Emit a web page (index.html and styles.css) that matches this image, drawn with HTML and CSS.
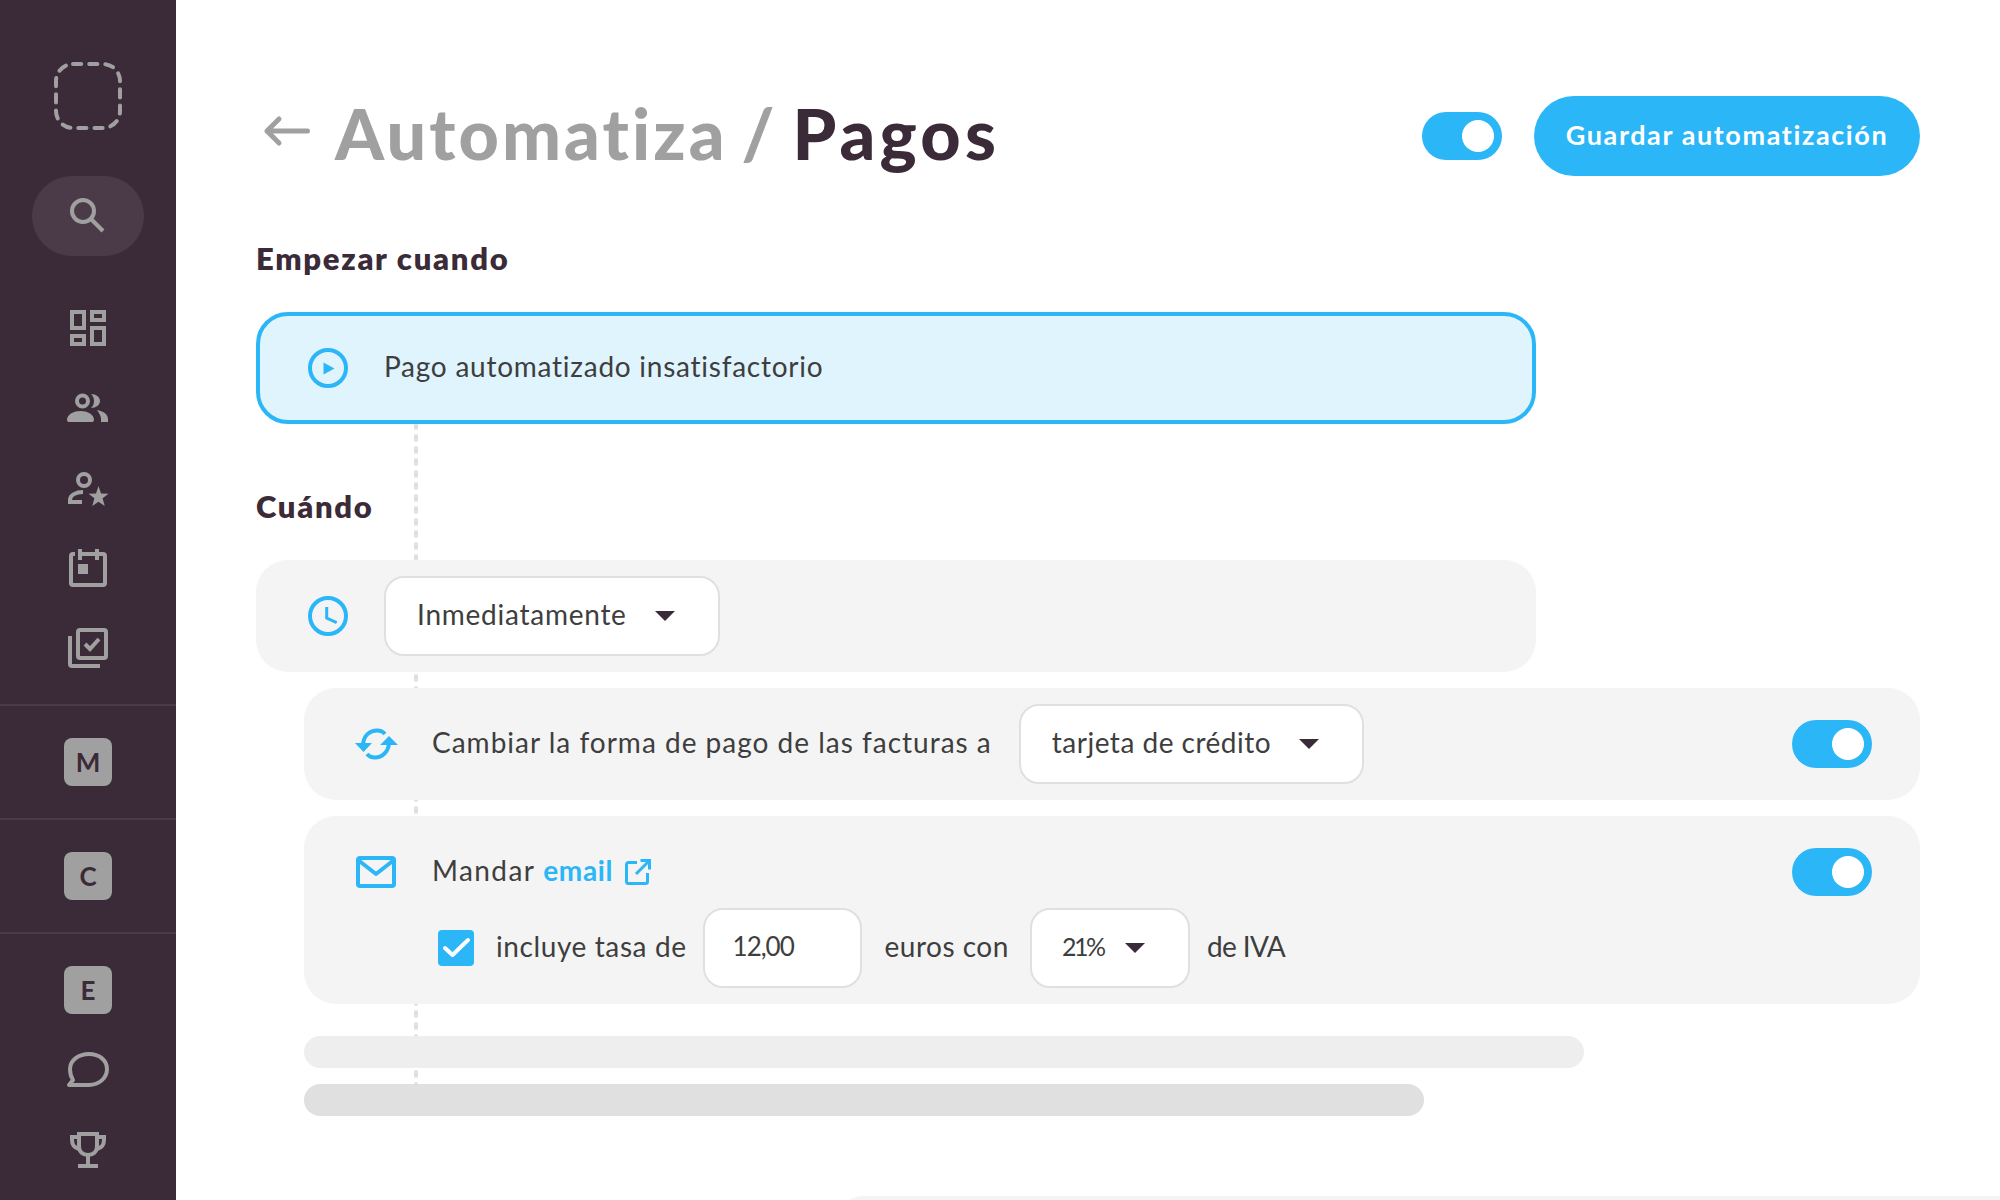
FILE: index.html
```html
<!DOCTYPE html>
<html lang="es">
<head>
<meta charset="utf-8">
<title>Automatiza / Pagos</title>
<link rel="stylesheet" href="styles.css">
</head>
<body>
<div class="app">
  <aside class="sidebar">
    <svg class="logo" width="68" height="68" viewBox="0 0 68 68"><rect x="2" y="2" width="64" height="64" rx="17" fill="none" stroke="#a0a0a0" stroke-width="4" stroke-dasharray="8.200 8" stroke-linecap="round"/></svg>
    <div class="search-pill">
      <svg width="48" height="48" viewBox="0 0 48 48" fill="none" stroke="#a0a0a0" stroke-width="4"><circle cx="19" cy="19" r="11"/><path d="M27 27l12 12"/></svg>
    </div>
    <nav class="nav">
      <div class="nav-item"><svg width="48" height="48" viewBox="0 0 48 48" fill="none" stroke="#a0a0a0" stroke-width="4"><rect x="8" y="8" width="12" height="16"/><rect x="28" y="8" width="12" height="8"/><rect x="8" y="32" width="12" height="8"/><rect x="28" y="24" width="12" height="16"/></svg></div>
      <div class="nav-item"><svg width="48" height="48" viewBox="0 0 48 48" fill="#a0a0a0"><circle cx="18.500" cy="17" r="5.500" fill="none" stroke="#a0a0a0" stroke-width="4"/><path d="M27 10c5 0 9 3 9 7s-4 7-9 7c2-2 3-4 3-7s-1-5-3-7z"/><path d="M5 36c0-4 5-7 11.500-7s11.500 3 11.500 7z" stroke="#a0a0a0" stroke-width="4" stroke-linejoin="round"/><path d="M33 26c6 1 11 4 11 9v3h-7v-3c0-3-2-6-4-9z"/></svg></div>
      <div class="nav-item"><svg width="48" height="48" viewBox="0 0 48 48" fill="none" stroke="#a0a0a0" stroke-width="4"><circle cx="20" cy="16" r="6"/><path d="M19 28C12 28 6 31 6 36v2h12"/><path fill="#a0a0a0" stroke="none" d="M34.500 22l2.500 7.500 7.500.3-5.900 4.500 2.100 7.700-6.200-4.200-6.200 4.200 2.100-7.700-5.900-4.500 7.500-.3z"/></svg></div>
      <div class="nav-item"><svg width="48" height="48" viewBox="0 0 48 48" fill="none" stroke="#a0a0a0" stroke-width="4"><path d="M11 10H9a2 2 0 0 0-2 2v27a2 2 0 0 0 2 2h30a2 2 0 0 0 2-2V12a2 2 0 0 0-2-2h-4M16 5v11M33 5v11M16 10h17"/><rect x="14" y="20" width="10" height="10" fill="#a0a0a0" stroke="none"/></svg></div>
      <div class="nav-item"><svg width="48" height="48" viewBox="0 0 48 48" fill="none" stroke="#a0a0a0" stroke-width="4"><rect x="14" y="6" width="28" height="28" rx="2"/><path d="M6 12v28a2 2 0 0 0 2 2h28"/><path d="M21 20l5 5 9-10"/></svg></div>
    </nav>
    <div class="nav-group"><span class="badge">M</span></div>
    <div class="nav-group"><span class="badge">C</span></div>
    <div class="nav-group nav-group-last"><span class="badge">E</span></div>
    <nav class="nav">
      <div class="nav-item"><svg width="48" height="48" viewBox="0 0 48 48" fill="none" stroke="#a0a0a0" stroke-width="4" stroke-linejoin="round"><path d="M25 8c10 0 18 6 18 15s-8 16-18 16H5l4-5c-2-3-3-7-3-11C6 14 15 8 25 8z"/></svg></div>
      <div class="nav-item"><svg width="48" height="48" viewBox="0 0 48 48" fill="none" stroke="#a0a0a0" stroke-width="4"><path d="M15 8h18v12c0 6-4 9-9 9s-9-3-9-9z"/><path d="M15 11H8v3c0 5 3 8 7 9M33 11h7v3c0 5-3 8-7 9M24 29v11"/><path d="M14 40h20"/></svg></div>
    </nav>
  </aside>

  <main class="main">
    <svg class="flow-line" width="4" height="668" viewBox="0 0 4 668"><line x1="2" y1="2" x2="2" y2="668" stroke="#e0e0e0" stroke-width="4" stroke-dasharray="4 8" stroke-linecap="round"/></svg>

    <header class="header">
      <svg class="back" width="50" height="34" viewBox="0 0 50 34" fill="none" stroke="#a0a0a0" stroke-width="5" stroke-linecap="round" stroke-linejoin="round"><path d="M5 17H45.500M17 5L5 17l12 12"/></svg>
      <h1 class="title"><span class="title-muted">Automatiza /</span> Pagos</h1>
      <span class="toggle"></span>
      <button class="primary">Guardar automatización</button>
    </header>

    <h2 class="label label-start">Empezar cuando</h2>
    <div class="row trigger">
      <svg class="row-icon" width="48" height="48" viewBox="0 0 48 48" fill="none" stroke="#2bb6f8" stroke-width="4"><circle cx="24" cy="24" r="18"/><path d="M19.500 18.500v12l11-6z" fill="#2bb6f8" stroke="none"/></svg>
      <span class="text text-wide">Pago automatizado insatisfactorio</span>
    </div>

    <h2 class="label label-when">Cuándo</h2>
    <div class="row when">
      <svg class="row-icon" width="48" height="48" viewBox="0 0 48 48" fill="none" stroke="#2bb6f8" stroke-width="4"><circle cx="24" cy="24" r="18"/><path d="M22.700 15v11l10 4.700" stroke-width="3"/></svg>
      <div class="select select-when"><span class="text text-wide">Inmediatamente</span><i class="caret"></i></div>
    </div>

    <div class="row action">
      <svg class="row-icon" width="48" height="48" viewBox="0 0 48 48" fill="none" stroke="#2bb6f8" stroke-width="4"><path d="M11 24C12 15 18 10.500 25 10.500 28 10.500 31 11.500 33 14"/><path d="M37 24C36 32 30 37.500 23 37.500 20 37.500 17 36.500 15 34"/><path fill="#2bb6f8" stroke="none" d="M3 23h17l-8.500 9zM28 25h18l-9-9z"/></svg>
      <span class="text text-wider">Cambiar la forma de pago de las facturas a</span>
      <div class="select select-card"><span class="text">tarjeta de crédito</span><i class="caret"></i></div>
      <span class="toggle row-toggle"></span>
    </div>

    <div class="row email">
      <div class="email-head">
        <svg class="row-icon" width="48" height="48" viewBox="0 0 48 48" fill="none" stroke="#2bb6f8" stroke-width="4" stroke-linejoin="round"><rect x="6" y="10" width="36" height="28" rx="2"/><path d="M6 12l18 14 18-14"/></svg>
        <span class="text mail-text">Mandar <a class="link">email</a></span>
        <svg class="ext" width="26" height="26" viewBox="0 0 26 26" fill="none" stroke="#2bb6f8" stroke-width="3"><path d="M12 3.500H3.500a2 2 0 0 0-2 2V22.500a2 2 0 0 0 2 2h17a2 2 0 0 0 2-2V14M11 15L23 3M15.500 1.500H24.500V10.500"/></svg>
        <span class="toggle row-toggle"></span>
      </div>
      <div class="email-fee">
        <span class="check"><svg width="36" height="36" viewBox="0 0 36 36" fill="none" stroke="#fff" stroke-width="4" stroke-linecap="round" stroke-linejoin="round"><path d="M7 18l7.500 7L30 10"/></svg></span>
        <span class="text fee-label">incluye tasa de</span>
        <div class="select select-amount"><span class="text num">12,00</span></div>
        <span class="text fee-mid">euros con</span>
        <div class="select select-iva"><span class="text num num-tight">21%</span><i class="caret"></i></div>
        <span class="text fee-end">de IVA</span>
      </div>
    </div>

    <div class="bar bar-light"></div>
    <div class="bar bar-dark"></div>
    <div class="next-card"></div>
  </main>
</div>
</body>
</html>
```
FILE: styles.css
```css
* { box-sizing: border-box; }
html, body { margin: 0; height: 1200px; overflow: hidden; background: #fff; }
body { font-family: "Lato", "Noto Sans", sans-serif; color: #3e3e3e; }

.app { display: flex; height: 1200px; }

.sidebar {
  width: 176px;
  flex: none;
  background: #3b2a38;
  display: flex;
  flex-direction: column;
  align-items: stretch;
  padding-top: 62px;
  overflow: hidden;
}
.logo { display: block; margin: 0 auto; }
.search-pill {
  width: 112px;
  height: 80px;
  margin: 46px auto 32px;
  border-radius: 40px;
  background: #4b3b49;
  display: flex;
  align-items: center;
  justify-content: center;
}
.nav-item { height: 80px; display: flex; align-items: center; justify-content: center; }
.nav-group {
  margin-top: 16px;
  padding: 32px 0;
  border-top: 2px solid #4a3b48;
  display: flex;
  justify-content: center;
}
.nav-group + .nav-group { margin-top: 0; }
.nav-group-last { padding-bottom: 16px; }
.badge {
  width: 48px;
  height: 48px;
  border-radius: 8px;
  background: #a0a0a0;
  color: #3b2a38;
  font-size: 26px;
  font-weight: 700;
  display: flex;
  align-items: center;
  justify-content: center;
}

.main {
  position: relative;
  flex: 1;
  min-width: 0;
  padding: 96px 80px 0;
  overflow: hidden;
}
.flow-line { position: absolute; left: 238px; top: 422px; }

.header { position: relative; display: flex; align-items: center; height: 80px; }
.back { margin: 0 23px 11px 6px; flex: none; }
.title {
  margin: 0 auto 0 0;
  padding-bottom: 6px;
  font-size: 70px;
  line-height: 80px;
  font-weight: 900;
  letter-spacing: 4.2px;
  word-spacing: -6px;
  color: #3b2a38;
  white-space: nowrap;
}
.title-muted { color: #a0a0a0; letter-spacing: 3.1px; }
.toggle {
  position: relative;
  display: block;
  flex: none;
  width: 80px;
  height: 48px;
  border-radius: 24px;
  background: #2bb6f8;
}
.toggle::after {
  content: "";
  position: absolute;
  top: 8px;
  right: 8px;
  width: 32px;
  height: 32px;
  border-radius: 50%;
  background: #fff;
}
.primary {
  margin-left: 32px;
  width: 386px;
  height: 80px;
  padding: 0 0 4px;
  border: 0;
  border-radius: 40px;
  background: #2bb6f8;
  color: #fff;
  font: 700 27px "Lato", sans-serif;
  letter-spacing: 1.6px;
}

.label {
  position: relative;
  margin: 0;
  font-size: 31px;
  line-height: 36px;
  font-weight: 800;
  letter-spacing: 1.7px;
  color: #3b2a38;
}
.label-start { margin-top: 64px; }
.label-when { margin-top: 64px; margin-bottom: 36px; }

.row {
  position: relative;
  display: flex;
  align-items: center;
  gap: 32px;
  background: #f4f4f4;
  border-radius: 32px;
  padding: 16px 48px;
}
.row-icon { flex: none; }
.text { font-size: 28px; line-height: 36px; padding-bottom: 5px; white-space: nowrap; letter-spacing: 0.5px; }
.text-wide { letter-spacing: 0.75px; }
.text-wider { letter-spacing: 1px; }
.num { font-size: 26px; letter-spacing: -1px; }
.num-tight { font-size: 25px; letter-spacing: -2.5px; }

.trigger {
  width: 1280px;
  height: 112px;
  margin-top: 36px;
  background: #e0f4fe;
  border: 4px solid #2bb6f8;
  padding-left: 44px;
}
.when { width: 1280px; height: 112px; }
.action { margin: 16px 0 0 48px; height: 112px; }
.action .select { margin-left: -5px; }
.row-toggle { margin-left: auto; }

.email {
  margin: 16px 0 0 48px;
  height: 188px;
  display: block;
  padding: 32px 48px 16px;
}
.email-head { display: flex; align-items: center; gap: 32px; height: 48px; }
.mail-text { letter-spacing: 1.4px; }
.ext { margin-left: -20px; flex: none; }
.link { color: #2bb6f8; font-weight: 700; letter-spacing: 0.6px; }
.email-fee { display: flex; align-items: center; margin: 12px 0 0 86px; height: 80px; }
.check {
  flex: none;
  width: 36px;
  height: 36px;
  border-radius: 4px;
  background: #2bb6f8;
}
.check svg { display: block; }
.fee-label { margin: 0 16px 0 22px; letter-spacing: 0.6px; }
.fee-mid { margin: 0 21px 0 23px; }
.fee-end { margin-left: 17px; letter-spacing: -0.6px; }

.select {
  flex: none;
  height: 80px;
  background: #fff;
  border: 2px solid #e0e0e0;
  border-radius: 20px;
  padding: 0 43px 0 31px;
  display: flex;
  align-items: center;
  justify-content: space-between;
}
.select-when { width: 336px; }
.select-card { width: 345px; }
.select-amount { width: 159px; padding-left: 28px; }
.select-iva { width: 160px; padding-left: 30px; }
.caret {
  display: block;
  width: 0;
  height: 0;
  border-style: solid;
  border-width: 10px 10px 0;
  border-color: #3b2a38 transparent transparent;
}

.bar { position: relative; margin-left: 48px; height: 32px; border-radius: 16px; }
.bar-light { width: 1280px; margin-top: 32px; background: #eeeeee; }
.bar-dark { width: 1120px; margin-top: 16px; background: #e0e0e0; }
.next-card {
  height: 120px;
  margin: 80px -80px 0 576px;
  background: #f4f4f4;
  border-radius: 32px 0 0 0;
}
```
